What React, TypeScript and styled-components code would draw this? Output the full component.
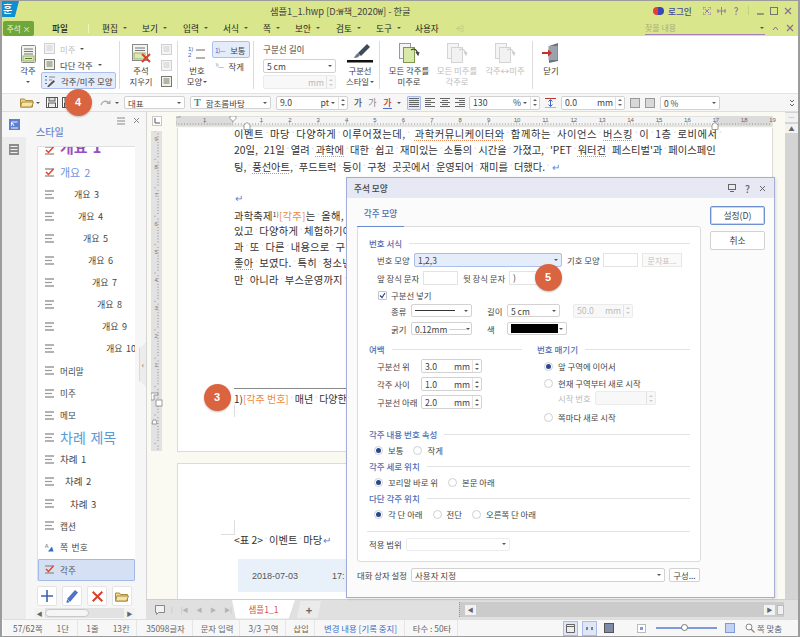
import React from 'react';
import styled, { createGlobalStyle } from 'styled-components';

const FONT = `"Noto Sans CJK KR", "Noto Sans", "Liberation Sans", sans-serif`;

const Global = createGlobalStyle`
  html, body { margin: 0; padding: 0; background: #fff; }
  body { font-family: ${FONT}; font-size: 8.8px; color: #3a3a3a; }
  * { box-sizing: border-box; }
`;

const Window = styled.div`
  width: 800px; height: 637px; position: relative; overflow: hidden;
  display: flex; flex-direction: column;
  border: 1px solid #9c9c9c; border-left-width: 2px; border-right-width: 2px;
  background: #fff;
`;

/* ---------- title + menu ---------- */
const TitleBar = styled.div`
  height: 19px; flex: none; background: #d9e68c; display: flex; align-items: center; position: relative; padding-right: 3px;
`;
const LogoBox = styled.div`
  width: 19px; height: 16px; margin-left: -2px; margin-top: -3px; background: #0f8fd2; color: #fff;
  clip-path: polygon(0 0, 100% 0, 78% 100%, 0 100%);
  font-size: 10px; font-weight: 700; line-height: 15px; text-align: center; padding-right: 4px;
`;
const TitleText = styled.div`
  margin-left: 251px; font-size: 9.3px; color: #444; white-space: nowrap; width: 383px;
`;
const LoginMark = styled.div`
  width: 11px; height: 8px; border-radius: 5px; flex: none; background: linear-gradient(90deg, #e2403c 0 45%, #3b46b4 45%);
`;
const LoginText = styled.div`
  margin-left: 4px; color: #4a4a9a; font-weight: 500; font-size: 8.6px; width: 33px;
`;
const TitleIcons = styled.div`
  display: flex; align-items: center; color: #8b5f8f;
`;
const IconSlot = styled.div<{ $w: number }>`
  width: ${p => p.$w}px; display: flex; justify-content: center; align-items: center; flex: none;
  font-size: 10px; color: inherit;
`;
const MenuBar = styled.div`
  height: 16px; flex: none; background: #d9e68c; display: flex; align-items: center; position: relative;
`;
const ContextTab = styled.div`
  width: 31px; height: 15px; margin-left: 1px; border-radius: 2px; background: #6ea83d; color: #eef6dd;
  font-size: 7.6px; display: flex; align-items: center; justify-content: center; gap: 2px;
`;
const FileMenu = styled.div`
  width: 33px; margin-left: 18px; font-size: 8.6px; color: #222; font-weight: 500;
`;
const MenuSep = styled.div`
  width: 1px; height: 9px; background: #eef5bf; margin-left: 3px; margin-right: 13px;
`;
const MenuEntry = styled.div<{ $w: number }>`
  width: ${p => p.$w}px; font-size: 8.6px; color: #222; display: flex; align-items: center; gap: 5px; white-space: nowrap; flex: none;
`;
const Caret = styled.span`
  display: inline-block; width: 0; height: 0; border-left: 2px solid transparent; border-right: 2px solid transparent;
  border-top: 2px solid #555; flex: none;
`;
const ShareSlot = styled.div`
  margin-left: 12px; flex: none;
`;
const FindBox = styled.div`
  width: 120px; height: 13px; margin-left: 181px; border-bottom: 1px solid #a57fb5; color: #a9ad80; font-size: 8px; flex: none;
  display: flex; justify-content: space-between; align-items: center; padding-right: 1px;
`;

/* ---------- ribbon ---------- */
const Ribbon = styled.div`
  height: 58px; flex: none; background: #fff; display: flex; align-items: stretch; padding: 5px 0 0;
  border-bottom: 1px solid #e3e3e3; position: relative;
`;
const RGroup = styled.div<{ $w: number; $line?: boolean }>`
  width: ${p => p.$w}px; height: 48px; display: flex; flex: none; border-right: ${p => (p.$line ? '1px solid #dcdcdc' : 'none')};
`;
const BigBtn = styled.div<{ $w: number; $ml: number; $off?: boolean }>`
  width: ${p => p.$w}px; margin-left: ${p => p.$ml}px; display: flex; flex-direction: column; align-items: center; flex: none;
  font-size: 8.4px; line-height: 11px; color: ${p => (p.$off ? '#bdbdbd' : '#3d3d3d')}; white-space: nowrap;
`;
const BigIcon = styled.div`
  height: 22px; display: flex; align-items: flex-end; margin-bottom: 2px;
`;
const BigCaret = styled(Caret)`
  margin-top: 5px;
`;
const SmallCol = styled.div<{ $ml: number; $w?: number }>`
  margin-left: ${p => p.$ml}px; width: ${p => (p.$w ? `${p.$w}px` : 'auto')}; display: flex; flex-direction: column; gap: 0; flex: none;
`;
const SmallBtn = styled.div<{ $on?: boolean; $off?: boolean; $h?: number }>`
  height: ${p => p.$h || 16}px; display: flex; align-items: center; gap: 5px; padding: 0 2px; white-space: nowrap; font-size: 8.4px;
  color: ${p => (p.$off ? '#bdbdbd' : '#3d3d3d')}; border-radius: 2px;
  border: 1px solid ${p => (p.$on ? '#aac0ea' : 'transparent')}; background: ${p => (p.$on ? '#e5ecf9' : 'transparent')};
`;
const TinyRule = styled.span<{ $c: string }>`
  color: ${p => p.$c}; font-size: 6.5px; letter-spacing: -0.5px;
`;
const FieldLabel = styled.div`
  height: 18px; line-height: 16px; font-size: 8.6px; color: #444;
`;
const FieldGap = styled.div`
  height: 2px; flex: none;
`;

/* ---------- shared form controls ---------- */
const SelectBox = styled.div<{ $w: number; $h?: number; $off?: boolean; $hl?: boolean; $ml?: number }>`
  width: ${p => p.$w}px; height: ${p => p.$h || 13}px; margin-left: ${p => p.$ml || 0}px; flex: none; display: flex; align-items: center; justify-content: space-between;
  padding: 0 3px; background: ${p => (p.$hl ? '#e6edfa' : '#fff')};
  border: 1px solid ${p => (p.$hl ? '#aac0ea' : p.$off ? '#ececec' : '#d2d2d2')};
  border-radius: 2px; font-size: 8.5px; color: ${p => (p.$off ? '#bbb' : '#444')}; white-space: nowrap; overflow: hidden;
`;
const SpinBox = styled.div<{ $w: number; $off?: boolean; $ml?: number }>`
  width: ${p => p.$w}px; height: 14px; margin-left: ${p => p.$ml || 0}px; flex: none; display: flex; align-items: center; justify-content: space-between;
  padding: 0 0 0 3px; background: ${p => (p.$off ? '#f8f8f8' : '#fff')}; border: 1px solid ${p => (p.$off ? '#ebebeb' : '#d2d2d2')};
  border-radius: 2px; font-size: 8.7px; color: ${p => (p.$off ? '#bbb' : '#444')};
`;
const SpinArrows = styled.div`
  width: 9px; height: 100%; border-left: 1px solid #e2e2e2; display: flex; flex-direction: column; align-items: center; justify-content: center; gap: 3px;
`;
const Up = styled.span<{ $off?: boolean }>`
  width: 0; height: 0; border-left: 2px solid transparent; border-right: 2px solid transparent; border-bottom: 2px solid ${p => (p.$off ? '#ccc' : '#666')};
`;
const Down = styled.span<{ $off?: boolean }>`
  width: 0; height: 0; border-left: 2px solid transparent; border-right: 2px solid transparent; border-top: 2px solid ${p => (p.$off ? '#ccc' : '#666')};
`;
const Unit = styled.span`
  margin-left: auto; margin-right: 2px;
`;
const UnitCaret = styled(Caret)`
  margin-right: 3px;
`;
const Spin = ({ w, value, unit, off, ml, caret }: { w: number; value?: string; unit?: string; off?: boolean; ml?: number; caret?: boolean }) => (
  <SpinBox $w={w} $off={off} $ml={ml}>
    <span>{value}</span>
    {unit && <Unit>{unit}</Unit>}
    {caret && <UnitCaret />}
    <SpinArrows><Up $off={off} /><Down $off={off} /></SpinArrows>
  </SpinBox>
);

/* ---------- format bar ---------- */
const FormatBar = styled.div`
  height: 18px; flex: none; background: #f6f6f6; display: flex; align-items: center; border-bottom: 1px solid #dedede;
`;
const FSlot = styled.div<{ $w: number; $ml?: number; $on?: boolean }>`
  width: ${p => p.$w}px; height: 14px; margin-left: ${p => p.$ml || 0}px; flex: none; display: flex; align-items: center; justify-content: center;
  border: 1px solid ${p => (p.$on ? '#a9bde8' : 'transparent')}; background: ${p => (p.$on ? '#dfe7f7' : 'transparent')}; border-radius: 1px;
  font-size: 9px; font-weight: 500; color: #555;
`;
const FontMark = styled.span`
  color: #1e9a8f; font-family: "Liberation Serif", serif; font-weight: 700; font-size: 10px; margin-right: 4px;
`;
const Inline = styled.span`
  display: flex; align-items: center; gap: 1px;
`;
const GrayGa = styled.span`
  font-weight: 400; color: #888;
`;
const ColorGa = styled.span`
  border-bottom: 1.5px solid #4a72c8; color: #c0392b; line-height: 11px;
`;

/* ---------- workspace ---------- */
const Workspace = styled.div`
  flex: 1; min-height: 0; display: flex;
`;
const SideRail = styled.div`
  width: 24px; flex: none; background: #ececec; display: flex; flex-direction: column;
`;
const RailTab = styled.div<{ $on?: boolean }>`
  height: 25px; display: flex; align-items: center; justify-content: center; background: ${p => (p.$on ? '#f7f7f7' : 'transparent')};
`;
const StylePanel = styled.div`
  width: 120px; flex: none; background: #f6f6f6; display: flex; flex-direction: column; position: relative;
`;
const PanelHead = styled.div`
  height: 34px; flex: none; display: flex; padding: 5px 6px 0 10px; justify-content: space-between;
`;
const PanelTitle = styled.div`
  color: #6f88cf; font-size: 10px; padding-top: 7px; font-weight: 500;
`;
const PanelTools = styled.div`
  display: flex; gap: 8px; color: #888; font-size: 10px; line-height: 10px;
`;
const StyleList = styled.div`
  margin-left: 11px; width: 98px; height: 435px; flex: none; background: #fff; border: 1px solid #e0e0e0; border-right: none; border-bottom: none;
  overflow: hidden; display: flex; flex-direction: column;
`;
const StyleRows = styled.div`
  margin-top: -8px; display: flex; flex-direction: column;
`;
const StyleRow = styled.div<{ $on?: boolean }>`
  height: 22.1px; flex: none; display: flex; align-items: center; padding-left: 6px; white-space: nowrap;
  background: ${p => (p.$on ? '#d6e0f4' : 'transparent')}; border: 1px solid ${p => (p.$on ? '#a3bae6' : 'transparent')}; border-left-width: 1px; border-radius: 1px;
`;
const StyleName = styled.span<{ $pad: number; $size: number; $color: string; $bold?: boolean; $lift?: number }>`
  margin-left: ${p => p.$pad}px; font-size: ${p => p.$size}px; color: ${p => p.$color}; font-weight: ${p => (p.$bold ? 700 : 400)}; word-spacing: 1.5px;
  transform: translateY(${p => -(p.$lift || 0)}px);
`;
const PanelButtons = styled.div`
  margin-left: 11px; margin-top: 5px; display: flex; gap: 5px; height: 20px; flex: none;
`;
const PanelBtn = styled.div`
  width: 20px; height: 20px; background: #fff; border: 1px solid #e4e4e4; border-radius: 2px; display: flex; align-items: center; justify-content: center;
`;
const HScroll = styled.div`
  margin: 2px 0 0 8px; width: 101px; height: 10px; display: flex; align-items: center; background: #e2e2e2;
`;
const ScrollBtn = styled.div`
  width: 11px; height: 10px; background: #f2f2f2; color: #666; font-size: 6px; display: flex; align-items: center; justify-content: center; flex: none;
`;
const ScrollThumb = styled.div`
  width: 44px; height: 8px; background: #f5f5f5; border: 1px solid #c9c9c9; border-radius: 4px; margin-right: auto;
`;
const CollapseHandle = styled.div`
  position: absolute; right: 0; top: 231px; width: 7px; height: 43px; background: #ececec; border: 1px solid #dadada; border-right: none;
  border-radius: 3px 0 0 3px; color: #666; font-size: 8px; display: flex; align-items: center; justify-content: center;
  clip-path: polygon(0 12%, 100% 0, 100% 100%, 0 88%);
`;

/* ---------- document ---------- */
const DocArea = styled.div`
  flex: 1; min-width: 0; display: flex; flex-direction: column;
`;
const DocMain = styled.div`
  flex: 1; min-height: 0; display: flex; background: #fafaf2; border-left: 1px solid #d5d5d5;
`;
const DocCanvas = styled.div`
  flex: 1; min-width: 0; display: flex; flex-direction: column;
`;
const RulerRow = styled.div`
  height: 16px; flex: none; display: flex; align-items: flex-start; padding: 4px 0 0 5px; position: relative; z-index: 1;
`;
const RulerCorner = styled.div`
  width: 10px; height: 10px; background: #fff; border: 1px solid #c8c8c8; margin-right: 14px; display: flex; align-items: center; justify-content: center; flex: none;
`;
const DocBody = styled.div`
  flex: 1; min-height: 0; display: flex;
`;
const VRulerCol = styled.div`
  width: 30px; flex: none; padding: 3px 0 0 4px;
`;
const Pages = styled.div`
  flex: 1; min-width: 0; display: flex; flex-direction: column; gap: 11px; overflow: hidden; padding-right: 12px;
`;
const Page = styled.div<{ $h: number }>`
  height: ${p => p.$h}px; flex: none; background: #fff; border: 1px solid #dcdcd4; position: relative; padding-left: 56px; overflow: hidden;
  color: #333; font-size: 10.3px;
`;
const Page1 = styled(Page)`
  border-top: none; & > :first-child { margin-top: -2px; }
`;
const TextLine = styled.div<{ $ls?: number }>`
  height: 16.4px; line-height: 16px; white-space: nowrap; letter-spacing: ${p => (p.$ls === undefined ? 0.2 : p.$ls)}px;
`;
const SpaceMark = styled.span`
  display: inline-block; width: 6px; text-align: center; color: #7a9fe0; font-size: 7px; letter-spacing: 0; vertical-align: 1px;
`;
const Wavy = styled.span`
  text-decoration: underline dotted #ef8a55 1px; text-underline-offset: 2px;
`;
const Orange = styled.span`
  color: #f08a3c;
`;
const Sup = styled.span`
  font-size: 6.5px; vertical-align: 3px;
`;
const ReturnMark = styled.span`
  color: #5b84d8; font-size: 10px; margin-left: 1px;
`;
const BlankLine = styled.div`
  height: 14.6px;
`;
const FootRule = styled.div`
  height: 1px; background: #8a8a8a; margin-top: 100px;
`;
const FootLine = styled.div`
  height: 20px; line-height: 20px; white-space: nowrap; font-size: 10px;
`;
const NoteCrop = styled.div`
  position: absolute; left: 56px; top: 277px; width: 1px; height: 12px; background: #ddd;
`;
const CaptionCrop = styled.div`
  position: absolute; left: 43px; top: 56px; width: 14px; height: 15px; border-bottom: 1px solid #ddd; border-right: 1px solid #ddd;
`;
const CaptionSpacer = styled.div`
  height: 68px;
`;
const CaptionLine = styled.div`
  height: 15px; line-height: 15px; white-space: nowrap;
`;
const DataBand = styled.div`
  margin-left: 4px; margin-top: 12px; height: 33px; background: #e8f0fa; display: flex; align-items: center; padding-left: 14px; gap: 34px; font-size: 9px; color: #555; font-family: "Liberation Sans", sans-serif;
`;
const VScroll = styled.div`
  width: 13px; flex: none; background: #d4d4d4; display: flex; flex-direction: column; align-items: center; padding-top: 1px; gap: 2px;
`;
const VScrollBtn = styled.div`
  width: 13px; height: 9px; background: #f2f2f2; color: #666; font-size: 6px; display: flex; align-items: center; justify-content: center;
`;
const TabBar = styled.div`
  height: 20px; flex: none; background: #e0e0e0; display: flex; align-items: center; padding-left: 9px; border-top: 1px solid #cfcfcf;
`;
const NavIcons = styled.div`
  width: 63px; display: flex; align-items: center; gap: 8px; padding-left: 2px; color: #b5b5b5; font-size: 6px; margin-left: 4px; flex: none;
`;
const DocTab = styled.div`
  width: 63px; height: 19px; margin-top: -1px; background: #fff; flex: none; display: flex; align-items: center; justify-content: center; color: #d9534f; font-size: 8.6px;
  clip-path: polygon(0 0, 100% 0, 90% 100%, 6% 100%);
`;
const AddTab = styled.div`
  width: 24px; height: 17px; margin-left: 2px; background: #ebebeb; flex: none; display: flex; align-items: center; justify-content: center; color: #666; font-size: 11px; font-weight: 700;
  clip-path: polygon(14% 0, 100% 0, 86% 100%, 0 100%);
`;
const TabScroll = styled.div`
  margin-left: 138px; width: 325px; height: 15px; display: flex; align-items: center; background: #cbcbcb; gap: 0; padding-left: 5px; border-left: 1px dotted #999; flex: none;
`;
const TabTrack = styled.div`
  width: 288px; flex: none;
`;
const SplitBtn = styled.div`
  width: 7px; height: 10px; background: #f0f0f0; border: 1px solid #bbb; margin-left: 2px; position: relative;
`;

/* ---------- status ---------- */
const StatusBar = styled.div`
  height: 17px; flex: none; background: #f7f7f7; display: flex; align-items: center; border-top: 1px solid #dedede; font-size: 8.4px; color: #666; margin-left: 1px;
`;
const StatusCell = styled.div<{ $w: number; $blue?: boolean }>`
  width: ${p => p.$w}px; height: 100%; flex: none; display: flex; align-items: center; justify-content: center; gap: 14px; padding-left: 2px;
  border-right: 1px solid #e6e6e6; white-space: nowrap; color: ${p => (p.$blue ? '#3d6cc6' : '#666')};
`;
const StatusTools = styled.div`
  flex: 1; display: flex; align-items: center; padding-left: 105px; position: relative;
`;
const ViewBtn = styled.div<{ $on?: boolean; $ml?: number; $mr?: number }>`
  width: 15px; height: 15px; margin-left: ${p => p.$ml || 0}px; margin-right: ${p => (p.$mr === undefined ? 4 : p.$mr)}px; border: 1px solid ${p => (p.$on ? '#a9bde8' : 'transparent')}; background: ${p => (p.$on ? '#dfe7f7' : 'transparent')}; display: flex; align-items: center; justify-content: center;
`;
const ZoomTrack = styled.div`
  width: 61px; height: 2px; background: #7f9ad8; margin: 0 5px 0 7px; position: relative;
`;
const ZoomKnob = styled.div`
  position: absolute; left: 25px; top: -3px; width: 7px; height: 7px; border-radius: 50%; background: #fff; border: 1px solid #777;
`;
const FitLabel = styled.span`
  margin-left: 2px; white-space: nowrap;
`;

/* ---------- dialog ---------- */
const Dialog = styled.div`
  position: absolute; left: 344px; top: 176px; width: 429px; height: 421px; background: #fbfbfb; z-index: 2;
  border: 1px solid #a3add8; box-shadow: 1px 1px 3px rgba(0,0,0,.12); display: flex; flex-direction: column;
`;
const DialogTitle = styled.div`
  height: 20px; flex: none; background: #e6e9f3; display: flex; align-items: center; padding: 0 8px 0 7px; justify-content: space-between; font-size: 8.6px; color: #444; font-weight: 500;
`;
const DialogTools = styled.div`
  display: flex; align-items: center; gap: 9px; color: #666; font-size: 10px;
`;
const DialogBody = styled.div`
  flex: 1; display: flex; padding-left: 10px;
`;
const DialogMain = styled.div`
  width: 344px; flex: none; display: flex; flex-direction: column;
`;
const TabStrip = styled.div`
  height: 28px; flex: none; display: flex; align-items: flex-end;
`;
const ActiveTab = styled.div`
  width: 47px; height: 28px; display: flex; align-items: center; justify-content: center; color: #4f6fb4; border-bottom: 1px solid #6b8bd0; font-size: 8.6px; font-weight: 500; margin-bottom: -1px; position: relative;
`;
const ContentBox = styled.div`
  height: 336px; flex: none; background: #fff; border: 1px solid #dcdcdc; border-radius: 3px; padding: 10px 10px 0 11px; display: flex; flex-direction: column;
`;
const Head = styled.div<{ $mt?: number }>`
  height: 12px; margin-top: ${p => p.$mt || 0}px; flex: none; display: flex; align-items: center; gap: 7px; color: #4f6fb4; font-size: 8.5px; white-space: nowrap; font-weight: 500;
  &::after { content: ''; flex: 1; height: 1px; background: #e3e3e3; }
`;
const FormRow = styled.div<{ $mt?: number; $pl?: number; $h?: number }>`
  height: ${p => p.$h || 14}px; margin-top: ${p => p.$mt || 0}px; padding-left: ${p => p.$pl || 0}px; flex: none; display: flex; align-items: center; white-space: nowrap; font-size: 8.4px; color: #444;
`;
const Lbl = styled.span<{ $w?: number; $ml?: number; $off?: boolean }>`
  width: ${p => (p.$w ? `${p.$w}px` : 'auto')}; margin-left: ${p => p.$ml || 0}px; flex: none; color: ${p => (p.$off ? '#b9b9b9' : '#444')};
`;
const PlainInput = styled.div<{ $w: number }>`
  width: ${p => p.$w}px; height: 14px; flex: none; background: #fff; border: 1px solid #e3e3e3; padding-left: 3px; line-height: 12px; font-size: 8.7px;
`;
const GhostBtn = styled.div`
  width: 40px; height: 14px; margin-left: 4px; flex: none; border: 1px solid #e8e8e8; background: #fafafa; color: #c2c2c2; font-size: 8px; display: flex; align-items: center; justify-content: center;
`;
const Check = styled.span`
  width: 9px; height: 9px; flex: none; border: 1px solid #c4c4c4; background: #fff; border-radius: 1px; margin-right: 4px; display: flex; align-items: center; justify-content: center;
`;
const LineSample = styled.span<{ $w: number }>`
  width: ${p => p.$w}px; height: 1px; background: #333; display: inline-block;
`;
const ColorSwatch = styled.span`
  width: 47px; height: 9px; background: #000; display: inline-block;
`;
const TwoCol = styled.div`
  display: flex; flex: none;
`;
const ColLeft = styled.div`
  width: 168px; padding-right: 15px; flex: none; display: flex; flex-direction: column;
`;
const ColRight = styled.div`
  flex: 1; display: flex; flex-direction: column;
`;
const RadioDot = styled.span<{ $on?: boolean }>`
  width: 9px; height: 9px; flex: none; border-radius: 50%; border: 1px solid #cfcfcf; background: #fff; margin-right: 5px; display: flex; align-items: center; justify-content: center;
  &::after { content: ''; width: 5px; height: 5px; border-radius: 50%; background: ${p => (p.$on ? '#2b4690' : 'transparent')}; }
`;
const RadioWrap = styled.span<{ $gap?: number }>`
  display: inline-flex; align-items: center; margin-right: ${p => p.$gap || 0}px;
`;
const Radio = ({ on, label, gap }: { on?: boolean; label: string; gap?: number }) => (
  <RadioWrap $gap={gap}><RadioDot $on={on} />{label}</RadioWrap>
);
const Divider = styled.div`
  height: 1px; flex: none; background: #e3e3e3; margin: 11px 0 0 -2px;
`;
const DialogFoot = styled.div`
  height: 14px; margin-top: 6px; flex: none; display: flex; align-items: center; white-space: nowrap; font-size: 8.4px; color: #444;
`;
const SmallBtnBox = styled.div`
  width: 31px; height: 14px; margin-left: 4px; flex: none; background: #fff; border: 1px solid #d2d2d2; border-radius: 2px; display: flex; align-items: center; justify-content: center; font-size: 8.4px; color: #444;
`;
const DialogSide = styled.div`
  margin-left: 9px; padding-top: 8px; display: flex; flex-direction: column; gap: 6px;
`;
const DialogBtn = styled.div<{ $primary?: boolean }>`
  width: 55px; height: 19px; background: #fff; display: flex; align-items: center; justify-content: center; border-radius: 2px; font-size: 8.8px; color: #444;
  border: 1px solid ${p => (p.$primary ? '#6f8fd0' : '#d2d2d2')}; box-shadow: ${p => (p.$primary ? 'inset 0 0 0 1px #c8d6f0' : 'none')};
`;
const Callout = styled.div<{ $x: number; $y: number }>`
  position: absolute; left: ${p => p.$x - 13.5}px; top: ${p => p.$y - 13.5}px; width: 27px; height: 27px; border-radius: 50%; background: #da6340;
  color: #fff; font-family: "Liberation Sans", sans-serif; font-weight: 700; font-size: 11px; display: flex; align-items: center; justify-content: center;
  box-shadow: 0 1px 2px rgba(0,0,0,.25); z-index: 5;
`;

/* ---------- icons ---------- */
const Svg = ({ w, h, children }: { w: number; h: number; children: React.ReactNode }) => (
  <svg width={w} height={h} viewBox={`0 0 ${w} ${h}`} style={{ display: 'block', flex: 'none' }}>{children}</svg>
);
const DocLines = ({ off }: { off?: boolean }) => {
  const c = off ? '#cfcfcf' : '#777';
  return (
    <Svg w={11} h={11}>
      <rect x=".5" y=".5" width="10" height="10" fill={off ? '#f4f4f4' : '#eef4e0'} stroke={c} />
      <path d="M2.5 3h6M2.5 5h6M2.5 7h6" stroke={c} />
    </Svg>
  );
};
const FootnoteIcon = () => (
  <Svg w={15} h={18}>
    <rect x=".5" y=".5" width="14" height="17" rx="1" fill="#f3f3ef" stroke="#8a8a8a" />
    <path d="M3 4h9M3 6.5h9M3 9h9" stroke="#777" />
    <rect x="2" y="11" width="11" height="5" fill="#dbe8b4" stroke="#9ab36a" />
    <path d="M4 13.5h7" stroke="#5a7a2a" />
  </Svg>
);
const ShapeIcon = () => (
  <Svg w={12} h={12}>
    <path d="M1 1.5h2M1 5h2M1 8.5h2" stroke="#3d76c8" strokeWidth="1.2" />
    <path d="M5 2h6M5 5h3" stroke="#888" />
    <path d="M3.5 11l6-6 1.5 1.5-6 5.5H3.5z" fill="#555" />
  </Svg>
);
const EraseIcon = () => (
  <Svg w={19} h={19}>
    <rect x=".5" y=".5" width="15" height="16" fill="#f3f3ef" stroke="#8a8a8a" />
    <path d="M3 4h10M3 6.5h10" stroke="#777" />
    <rect x="2" y="9" width="11" height="6" fill="#dbe8b4" stroke="#9ab36a" />
    <path d="M10 10l8 8M18 10l-8 8" stroke="#d9402c" strokeWidth="2" />
  </Svg>
);
const NumberIcon = () => (
  <Svg w={18} h={18}>
    <text x="0" y="6" fontSize="6" fill="#2e62b8" fontFamily="Liberation Sans">1)</text>
    <text x="0" y="12" fontSize="6" fill="#2e62b8" fontFamily="Liberation Sans">2</text>
    <text x="0" y="17" fontSize="5" fill="#2e62b8" fontFamily="Liberation Sans">↓</text>
    <path d="M8 5h9M8 13h9" stroke="#666" />
  </Svg>
);
const BrushIcon = () => (
  <Svg w={26} h={20}>
    <path d="M20 1l3 3-9 9-3-3z" fill="#3d4a58" />
    <path d="M11 10c-2 1-3 3-4 5 3 0 5-1 6-3z" fill="#6a7785" />
    <rect x="0" y="17" width="26" height="2.5" fill="#111" />
  </Svg>
);
const ConvertIcon = ({ off }: { off?: boolean }) => {
  const s = off ? '#d4d4d4' : '#7d9a4a';
  const f = off ? '#f2f2f2' : '#d9e8a8';
  return (
    <Svg w={21} h={20}>
      <rect x=".5" y=".5" width="11" height="15" fill="#f4f4f4" stroke={off ? '#d4d4d4' : '#999'} />
      <rect x="4.5" y="4.5" width="11" height="15" fill={f} stroke={s} />
      <path d="M12 7c4-2 6 0 7 4M17 9l2 3 1-3" fill="none" stroke={off ? '#d0d0d0' : '#444'} strokeWidth="1.2" />
    </Svg>
  );
};
const ExitIcon = () => (
  <Svg w={18} h={20}>
    <path d="M7 3l9-3v18l-9 2z" fill="#6d7580" />
    <rect x="6.5" y="3" width="9" height="14" fill="#9aa2ac" />
    <path d="M0 10h7" stroke="#c9302c" strokeWidth="2" />
    <path d="M6 6.5l4 3.5-4 3.5z" fill="#c9302c" />
  </Svg>
);
const FolderIcon = () => (
  <Svg w={14} h={11}>
    <path d="M.5 2h4l1 1.5h7v6.5H.5z" fill="#f0d58a" stroke="#a88b3c" />
    <path d="M2 5h11.5l-2 5H.5z" fill="#f6e3a8" stroke="#a88b3c" />
  </Svg>
);
const SaveIcon = () => (
  <Svg w={12} h={11}>
    <rect x=".5" y=".5" width="11" height="10" fill="#fff" stroke="#555" />
    <rect x="3" y=".5" width="6" height="3.5" fill="#ddd" stroke="#555" />
    <rect x="2.5" y="6" width="7" height="4.5" fill="#eee" stroke="#555" />
  </Svg>
);
const RedoIcon = () => (
  <Svg w={11} h={9}>
    <path d="M1 7c1-4 5-5 8-2" fill="none" stroke="#aaa" strokeWidth="1.3" />
    <path d="M10.5 2v4h-4z" fill="#aaa" />
  </Svg>
);
const AlignIcon = ({ kind }: { kind: 'j' | 'l' | 'c' | 'r' }) => {
  const rows = [0, 1, 2, 3, 4];
  const geo = (i: number): [number, number] => {
    const short = i % 2 === 1;
    if (kind === 'j') return [0, 10];
    if (kind === 'l') return [0, short ? 6 : 10];
    if (kind === 'c') return short ? [2, 8] : [0, 10];
    return short ? [4, 10] : [0, 10];
  };
  return (
    <Svg w={10} h={10}>
      {rows.map(i => {
        const [a, b] = geo(i);
        return <rect key={i} x={a} y={i * 2} width={b - a} height="1" fill="#666" />;
      })}
    </Svg>
  );
};
const LineGapIcon = () => (
  <Svg w={11} h={10}>
    <path d="M0 .5h11" stroke="#b33" /><path d="M0 9.5h11" stroke="#b33" opacity=".4" />
    <path d="M5.5 2v6M3.5 3.5l2-2 2 2M3.5 6.5l2 2 2-2" stroke="#3a66b8" fill="none" />
  </Svg>
);
const OutlineBox = () => (
  <Svg w={10} h={10}><rect x=".5" y=".5" width="9" height="9" fill="#d8d8d8" stroke="#999" /></Svg>
);
const RailStyleIcon = () => (
  <Svg w={11} h={11}>
    <rect width="11" height="11" fill="#5d7fd0" />
    <path d="M2.5 5.5V3h6M2 7l1.5-3 1.5 3M2 9h7" stroke="#fff" fill="none" strokeWidth=".9" />
  </Svg>
);
const RailListIcon = () => (
  <Svg w={10} h={11}>
    <rect width="10" height="11" fill="#8b8b8b" />
    <path d="M1.5 2.5h7M1.5 5.5h7M1.5 8.5h7" stroke="#eee" />
  </Svg>
);
const StyleMark = ({ kind }: { kind: 'plain' | 'check' | 'letter' }) => (
  <Svg w={9} h={9}>
    {kind === 'letter' ? (
      <>
        <path d="M0 5l1.7-4 1.7 4M.8 3.8h1.8" stroke="#888" fill="none" strokeWidth=".7" />
        <path d="M3 8.5l4-5 1.5 5z" fill="#2c6fc8" />
      </>
    ) : (
      <>
        <path d="M0 1h9M0 8h9" stroke="#9a9a9a" strokeWidth="1.5" />
        {kind === 'plain' && <path d="M0 4.5h7" stroke="#9a9a9a" strokeWidth="1.2" />}
        {kind === 'check' && <path d="M1 4l2.5 2.5L8.5 1" stroke="#e0452c" fill="none" strokeWidth="1.5" />}
      </>
    )}
  </Svg>
);
const PlusIcon = () => <Svg w={12} h={12}><path d="M6 0v12M0 6h12" stroke="#3e62b0" strokeWidth="1.6" /></Svg>;
const PenIcon = () => (
  <Svg w={12} h={13}>
    <path d="M9 0l3 2.5L4 12 .5 13 1 9z" fill="#4d74c6" />
    <path d="M1 9l3 3" stroke="#a9bfe8" />
  </Svg>
);
const CrossIcon = () => <Svg w={11} h={11}><path d="M.7.7l9.6 9.6M10.3.7L.7 10.3" stroke="#d9402c" strokeWidth="2" /></Svg>;
const RulerH = () => {
  const W = 596;
  const zero = 57;
  const cm = 28.4;
  const ticks = [] as React.ReactNode[];
  for (let i = 0; i < W; i += 2.84) {
    const major = Math.abs(((i - zero) / cm) - Math.round((i - zero) / cm)) < 0.05;
    ticks.push(<path key={i} d={`M${i.toFixed(1)} ${major ? 5 : 7}V9`} stroke="#9a9a9a" strokeWidth=".6" />);
  }
  const labels = [1, 0, 1, 2, 3, 4, 5, 6, 7, 8, 9, 10, 11, 12, 13, 14, 15, 16, 17, 18, 19];
  return (
    <Svg w={604} h={14}>
      <rect width={W} height="10" fill="#f4f4f4" stroke="#d0d0d0" />
      <rect width={zero} height="10" fill="#dcdcdc" />
      <rect x="539" width="57" height="10" fill="#dcdcdc" />
      {ticks}
      {labels.map((n, i) => (n === 0 ? null : (
        <text key={i} x={zero + (i - 1) * cm} y="6" fontSize="6" fill="#666" textAnchor="middle" fontFamily="Liberation Sans">{n}</text>
      )))}
      <path d="M54 0h6v2.5l-3 3-3-3z" fill="#fff" stroke="#777" strokeWidth=".7" />
      <path d="M68 13.5V9l3-2.5L74 9v4.5z" fill="#fff" stroke="#777" strokeWidth=".7" />
      <path d="M536 13.5V9l3-2.5L542 9v4.5z" fill="#fff" stroke="#777" strokeWidth=".7" />
      <rect x="-2" y="-1" width="6" height="2" fill="#fff" stroke="#777" strokeWidth=".7" />
    </Svg>
  );
};
const RulerV = () => {
  const H = 320;
  const ticks = [] as React.ReactNode[];
  for (let y = 0; y < H; y += 2.84) {
    ticks.push(<path key={y} d={`M${Math.round(y / 2.84) % 10 === 0 ? 3 : 6} ${y.toFixed(1)}h2`} stroke="#9a9a9a" strokeWidth=".6" />);
  }
  const nums = [9, 8, 7, 6, 5, 4, 3, 2, 1];
  return (
    <Svg w={12} h={H}>
      <rect width="11" height={H} fill="#e2e2e2" />
      {ticks}
      {nums.map((n, i) => (
        <text key={n} x="5" y={10 + i * 28.2} fontSize="5.5" fill="#777" textAnchor="middle" fontFamily="Liberation Sans">{n}</text>
      ))}
      <path d="M0 262h7v2H3v5H0z" fill="#fff" stroke="#777" strokeWidth=".7" />
      <rect x="5" y="269" width="6" height="6" fill="#fff" stroke="#777" strokeWidth=".7" />
      <path d="M1 293h5l-1-4H2z" fill="#fff" stroke="#777" strokeWidth=".7" />
    </Svg>
  );
};

const renderMarks = (s: string) =>
  s.split('˅').map((part, i, arr) => (
    <React.Fragment key={i}>{part}{i < arr.length - 1 && <SpaceMark>˅</SpaceMark>}</React.Fragment>
  ));

const STYLES: { name: string; pad: number; size: number; color: string; bold?: boolean; kind: 'plain' | 'check' | 'letter'; on?: boolean; lift?: number }[] = [
  { name: '개요 1', pad: 6, size: 15, color: '#9a4fc0', bold: true, kind: 'check', lift: 4 },
  { name: '개요 2', pad: 6, size: 11, color: '#6f93e0', kind: 'check' },
  { name: '개요 3', pad: 20, size: 9, color: '#444', kind: 'plain' },
  { name: '개요 4', pad: 24, size: 9, color: '#444', kind: 'plain' },
  { name: '개요 5', pad: 29, size: 9, color: '#444', kind: 'plain' },
  { name: '개요 6', pad: 34, size: 9, color: '#444', kind: 'plain' },
  { name: '개요 7', pad: 38, size: 9, color: '#444', kind: 'plain' },
  { name: '개요 8', pad: 43, size: 9, color: '#444', kind: 'plain' },
  { name: '개요 9', pad: 48, size: 9, color: '#444', kind: 'plain' },
  { name: '개요 10', pad: 52, size: 9, color: '#444', kind: 'plain' },
  { name: '머리말', pad: 6, size: 8.6, color: '#444', kind: 'plain' },
  { name: '미주', pad: 6, size: 8.6, color: '#444', kind: 'plain' },
  { name: '메모', pad: 6, size: 8.6, color: '#444', kind: 'plain' },
  { name: '차례 제목', pad: 6, size: 14, color: '#5a9ad8', kind: 'plain' },
  { name: '차례 1', pad: 6, size: 9.5, color: '#444', kind: 'plain' },
  { name: '차례 2', pad: 11, size: 9.5, color: '#444', kind: 'plain' },
  { name: '차례 3', pad: 16, size: 9.5, color: '#444', kind: 'plain' },
  { name: '캡션', pad: 6, size: 8.6, color: '#444', kind: 'plain' },
  { name: '쪽 번호', pad: 6, size: 8.8, color: '#444', kind: 'letter' },
  { name: '각주', pad: 6, size: 8.6, color: '#555', kind: 'check', on: true },
];

const MENUS: [string, number][] = [['편집', 40], ['보기', 41], ['입력', 40], ['서식', 40], ['쪽', 32], ['보안', 41], ['검토', 40], ['도구', 39]];

export default function App() {
  return (
    <>
      <Global />
      <Window>
        <TitleBar>
          <LogoBox>훈</LogoBox>
          <TitleText>샘플1_1.hwp [D:₩책_2020₩] - 한글</TitleText>
          <LoginMark />
          <LoginText>로그인</LoginText>
          <TitleIcons>
            <IconSlot $w={12}>
              <Svg w={8} h={8}><path d="M0 3V0h3M5 0h3v3M8 5v3H5M3 8H0V5M2 2l4 4M6 2L2 6" stroke="#9a78a8" fill="none" /></Svg>
            </IconSlot>
            <IconSlot $w={16}>
              <Svg w={9} h={8}><path d="M4.5 0v8M1 2v4M8 2v4M0 4h9" stroke="#9a78a8" fill="none" /></Svg>
            </IconSlot>
            <IconSlot $w={14}>?</IconSlot>
            <IconSlot $w={10}>
              <Svg w={1} h={9}><path d="M.5 0v9" stroke="#c3d276" /></Svg>
            </IconSlot>
            <IconSlot $w={14}><Svg w={8} h={8}><path d="M1 7h7" stroke="#666" strokeWidth="1.2" /></Svg></IconSlot>
            <IconSlot $w={14}><Svg w={8} h={8}><rect x=".5" y=".5" width="7" height="7" fill="none" stroke="#776" /></Svg></IconSlot>
            <IconSlot $w={14}><Svg w={8} h={8}><path d="M1 1l6 6M7 1L1 7" stroke="#8b6a90" strokeWidth="1.1" /></Svg></IconSlot>
          </TitleIcons>
        </TitleBar>
        <MenuBar>
          <ContextTab>주석 <span>×</span></ContextTab>
          <FileMenu>파일</FileMenu>
          <MenuSep />
          {MENUS.map(([m, w]) => (
            <MenuEntry key={m} $w={w}>{m}<Caret /></MenuEntry>
          ))}
          <MenuEntry $w={28}>사용자</MenuEntry>
          <ShareSlot><Svg w={9} h={9}><path d="M1 4.5L8 1v7zM1 4.5h7" fill="none" stroke="#c6d380" /></Svg></ShareSlot>
          <FindBox>찾을 내용<Caret /></FindBox>
          <IconSlot $w={20}><Svg w={7} h={5}><path d="M1 4l2.5-3L6 4" fill="none" stroke="#8b6a90" /></Svg></IconSlot>
          <IconSlot $w={9}><Svg w={8} h={8}><path d="M1 1l6 6M7 1L1 7" stroke="#8b6a90" strokeWidth="1.1" /></Svg></IconSlot>
        </MenuBar>

        <Ribbon>
          <RGroup $w={118} $line>
            <BigBtn $w={22} $ml={15}>
              <BigIcon><FootnoteIcon /></BigIcon>
              각주
              <BigCaret />
            </BigBtn>
            <SmallCol $ml={2} $w={75}>
              <SmallBtn $off><DocLines off /> 미주 <Caret /></SmallBtn>
              <SmallBtn><DocLines /> 다단 각주 <Caret /></SmallBtn>
              <SmallBtn $on $h={17}><ShapeIcon />각주/미주 모양</SmallBtn>
            </SmallCol>
          </RGroup>
          <RGroup $w={58} $line>
            <BigBtn $w={24} $ml={9}>
              <BigIcon><EraseIcon /></BigIcon>
              <span>주석</span>
              <span>지우기</span>
            </BigBtn>
            <SmallCol $ml={5}>
              <SmallBtn $off><DocLines off /></SmallBtn>
              <SmallBtn $off><DocLines off /></SmallBtn>
              <SmallBtn><DocLines /></SmallBtn>
            </SmallCol>
          </RGroup>
          <RGroup $w={76} $line>
            <BigBtn $w={26} $ml={6}>
              <BigIcon><NumberIcon /></BigIcon>
              <span>번호</span>
              <Inline>모양<Caret /></Inline>
            </BigBtn>
            <SmallCol $ml={2} $w={38}>
              <SmallBtn $on $h={17}><TinyRule $c="#3668c0">1)—</TinyRule>보통</SmallBtn>
              <SmallBtn><TinyRule $c="#777">¹⁾—</TinyRule>작게</SmallBtn>
            </SmallCol>
          </RGroup>
          <RGroup $w={126} $line>
            <SmallCol $ml={9} $w={74}>
              <FieldLabel>구분선 길이</FieldLabel>
              <SelectBox $w={73} $h={14}>5 cm<Caret /></SelectBox>
              <FieldGap />
              <Spin w={73} unit="mm" off />
            </SmallCol>
            <BigBtn $w={28} $ml={9}>
              <BigIcon><BrushIcon /></BigIcon>
              <span>구분선</span>
              <Inline>스타일<Caret /></Inline>
            </BigBtn>
          </RGroup>
          <RGroup $w={153} $line>
            <BigBtn $w={40} $ml={9}>
              <BigIcon><ConvertIcon /></BigIcon>
              <span>모든 각주를</span>
              <span>미주로</span>
            </BigBtn>
            <BigBtn $w={40} $ml={8} $off>
              <BigIcon><ConvertIcon off /></BigIcon>
              <span>모든 미주를</span>
              <span>각주로</span>
            </BigBtn>
            <BigBtn $w={38} $ml={9} $off>
              <BigIcon><ConvertIcon off /></BigIcon>
              <span>각주↔미주</span>
            </BigBtn>
          </RGroup>
          <RGroup $w={40}>
            <BigBtn $w={18} $ml={9}>
              <BigIcon><ExitIcon /></BigIcon>
              닫기
            </BigBtn>
          </RGroup>
        </Ribbon>

        <FormatBar>
          <FSlot $w={15} $ml={17}><FolderIcon /></FSlot>
          <FSlot $w={8}><Caret /></FSlot>
          <FSlot $w={14} $ml={3}><SaveIcon /></FSlot>
          <FSlot $w={14} $ml={2}><SaveIcon /></FSlot>
          <FSlot $w={16} $ml={22}><RedoIcon /></FSlot>
          <FSlot $w={8}><Caret /></FSlot>
          <SelectBox $w={61} $ml={3}>대표<Caret /></SelectBox>
          <SelectBox $w={81} $ml={5}>
            <Inline><FontMark>T</FontMark>함초롬바탕</Inline><Caret />
          </SelectBox>
          <Spin w={72} ml={5} value="9.0" unit="pt" caret />
          <FSlot $w={14} $ml={3}>가</FSlot>
          <FSlot $w={15}><GrayGa>가</GrayGa></FSlot>
          <FSlot $w={15}><ColorGa>가</ColorGa></FSlot>
          <FSlot $w={8}><Caret /></FSlot>
          <FSlot $w={14} $ml={4} $on><AlignIcon kind="j" /></FSlot>
          <FSlot $w={15} $ml={1}><AlignIcon kind="l" /></FSlot>
          <FSlot $w={15}><AlignIcon kind="c" /></FSlot>
          <FSlot $w={15}><AlignIcon kind="r" /></FSlot>
          <Spin w={71} ml={2} value="130" unit="%" caret />
          <FSlot $w={15} $ml={3}><LineGapIcon /></FSlot>
          <Spin w={64} ml={3} value="0.0" unit="mm" />
          <FSlot $w={14} $ml={3}><OutlineBox /></FSlot>
          <FSlot $w={14} $ml={1}><OutlineBox /></FSlot>
          <SelectBox $w={60} $h={14} $ml={3}>0 %<Caret /></SelectBox>
          <FSlot $w={8} $ml={68}><Svg w={6} h={8}><path d="M1 1l2 2 2-2M1 5l2 2 2-2" fill="none" stroke="#666" /></Svg></FSlot>
        </FormatBar>

        <Workspace>
          <SideRail>
            <RailTab $on><RailStyleIcon /></RailTab>
            <RailTab><RailListIcon /></RailTab>
          </SideRail>
          <StylePanel>
            <PanelHead>
              <PanelTitle>스타일</PanelTitle>
              <PanelTools>
                <Svg w={8} h={8}><path d="M0 1h8M0 4h8M0 7h8" stroke="#888" /></Svg>
                <Svg w={7} h={7}><path d="M1 1l5 5M6 1L1 6" stroke="#888" /></Svg>
              </PanelTools>
            </PanelHead>
            <StyleList>
              <StyleRows>
                {STYLES.map(s => (
                  <StyleRow key={s.name} $on={s.on}>
                    <StyleMark kind={s.kind} />
                    <StyleName $pad={s.pad} $size={s.size} $color={s.color} $bold={s.bold} $lift={s.lift}>{s.name}</StyleName>
                  </StyleRow>
                ))}
              </StyleRows>
            </StyleList>
            <PanelButtons>
              <PanelBtn><PlusIcon /></PanelBtn>
              <PanelBtn><PenIcon /></PanelBtn>
              <PanelBtn><CrossIcon /></PanelBtn>
              <PanelBtn><FolderIcon /></PanelBtn>
            </PanelButtons>
            <HScroll>
              <ScrollBtn>◀</ScrollBtn>
              <ScrollThumb />
              <ScrollBtn>▶</ScrollBtn>
            </HScroll>
            <CollapseHandle>‹</CollapseHandle>
          </StylePanel>

          <DocArea>
            <DocMain>
              <DocCanvas>
                <RulerRow>
                  <RulerCorner><Svg w={6} h={6}><path d="M1 0v5h5" fill="none" stroke="#555" /></Svg></RulerCorner>
                  <RulerH />
                </RulerRow>
                <DocBody>
                  <VRulerCol><RulerV /></VRulerCol>
                  <Pages>
                    <Page1 $h={324}>
                      <TextLine $ls={0.55}>{renderMarks('이벤트˅마당˅다양하게˅이루어졌는데,˅ ')}<Wavy>과학커뮤니케이터와</Wavy>{renderMarks('˅함께하는˅사이언스˅')}<Wavy>버스킹</Wavy>{renderMarks('˅이˅1층˅로비에서˅')}</TextLine>
                      <TextLine $ls={0}>{renderMarks('20일,˅21일˅열려˅')}<Wavy>과학에</Wavy>{renderMarks('˅대한˅쉽고˅재미있는˅소통의˅시간을˅가졌고,˅\'PET˅')}<Wavy>워터건</Wavy>{renderMarks('˅페스티벌\'과˅페이스페인')}</TextLine>
                      <TextLine $ls={-0.05}>{renderMarks('팅,˅')}<Wavy>풍선아트</Wavy>{renderMarks(',˅푸드트럭˅등이˅구청˅곳곳에서˅운영되어˅재미를˅더했다.˅')}<ReturnMark>↵</ReturnMark></TextLine>
                      <BlankLine />
                      <TextLine><ReturnMark>↵</ReturnMark></TextLine>
                      <TextLine>과학축제<Sup>1)</Sup><Orange>[각주]</Orange>{renderMarks('는˅올해,')}</TextLine>
                      <TextLine>{renderMarks('있고˅다양하게˅체험하기에')}</TextLine>
                      <TextLine>{renderMarks('과˅또˅다른˅내용으로˅구')}</TextLine>
                      <TextLine><Wavy>좋아</Wavy>{renderMarks('˅보였다.˅특히˅청소년')}</TextLine>
                      <TextLine>{renderMarks('만˅아니라˅부스운영까지˅')}</TextLine>
                      <FootRule />
                      <FootLine>1)<Orange>[각주 번호]</Orange>{renderMarks('˅매년˅다양한˅')}</FootLine>
                      <NoteCrop />
                    </Page1>
                    <Page $h={140}>
                      <CaptionSpacer />
                      <CaptionCrop />
                      <CaptionLine>&lt;표 2&gt;{renderMarks('˅이벤트˅마당')}<ReturnMark>↵</ReturnMark></CaptionLine>
                      <DataBand><span>2018-07-03</span><span>17:</span></DataBand>
                    </Page>
                  </Pages>
                </DocBody>
              </DocCanvas>
              <VScroll>
                <VScrollBtn>─</VScrollBtn>
                <VScrollBtn>▲</VScrollBtn>
              </VScroll>
            </DocMain>
            <TabBar>
              <Svg w={10} h={10}><path d="M.5.5h9v7h-6l-2 2v-2h-1z" fill="#f2f2f2" stroke="#888" /></Svg>
              <NavIcons><span>|</span><span>|◀</span><span>◀</span><span>▶</span><span>▶|</span></NavIcons>
              <DocTab>샘플1_1</DocTab>
              <AddTab>+</AddTab>
              <TabScroll>
                <ScrollBtn>◀</ScrollBtn>
                <TabTrack />
                <ScrollBtn>▶</ScrollBtn>
                <SplitBtn />
              </TabScroll>
            </TabBar>
          </DocArea>
        </Workspace>

        <StatusBar>
          <StatusCell $w={75}><span>57/62쪽</span><span>1단</span></StatusCell>
          <StatusCell $w={59}><span>1줄</span><span>13칸</span></StatusCell>
          <StatusCell $w={56}>35098글자</StatusCell>
          <StatusCell $w={47}>문자 입력</StatusCell>
          <StatusCell $w={46}>3/3 구역</StatusCell>
          <StatusCell $w={29}>삽입</StatusCell>
          <StatusCell $w={90} $blue>변경 내용 [기록 중지]</StatusCell>
          <StatusCell $w={53}>타수 : 50타</StatusCell>
          <StatusTools>
            <ViewBtn $on><Svg w={9} h={9}><path d="M.5.5h8v8h-8zM.5 2.5h8" fill="#eee" stroke="#666" /></Svg></ViewBtn>
            <ViewBtn $on><Svg w={9} h={9}><path d="M2 3v3M7 3v3" stroke="#555" strokeWidth="1.4" /></Svg></ViewBtn>
            <ViewBtn><Svg w={10} h={10}><rect x=".5" y=".5" width="9" height="9" fill="#7f8aa8" stroke="#555" /></Svg></ViewBtn>
            <ViewBtn $ml={14} $mr={0}><Svg w={9} h={9}><rect x=".5" y=".5" width="8" height="8" fill="#fff" stroke="#bbb" /><rect x="3" y="3" width="3" height="3" fill="#7f9ad8" /></Svg></ViewBtn>
            <ZoomTrack><ZoomKnob /></ZoomTrack>
            <ViewBtn $mr={8}><Svg w={10} h={10}><rect x=".5" y=".5" width="9" height="9" fill="#c2d2f0" stroke="#7f9ad8" /></Svg></ViewBtn>
            <Svg w={10} h={10}><circle cx="4" cy="4" r="3" fill="#fff" stroke="#888" /><path d="M6 6l3.5 3.5" stroke="#888" strokeWidth="1.2" /></Svg>
            <FitLabel>쪽 맞춤</FitLabel>
          </StatusTools>
        </StatusBar>

        <Dialog>
          <DialogTitle>
            주석 모양
            <DialogTools>
              <Svg w={8} h={8}><rect x=".5" y=".5" width="7" height="5" fill="none" stroke="#666" /><path d="M2 7.5h4" stroke="#666" /></Svg>
              <span>?</span>
              <Svg w={7} h={7}><path d="M1 1l5 5M6 1L1 6" stroke="#666" /></Svg>
            </DialogTools>
          </DialogTitle>
          <DialogBody>
            <DialogMain>
              <TabStrip><ActiveTab>각주 모양</ActiveTab></TabStrip>
              <ContentBox>
                <Head>번호 서식</Head>
                <FormRow $mt={4} $pl={8}>
                  <Lbl $w={37}>번호 모양</Lbl>
                  <SelectBox $w={148} $h={14} $hl>1,2,3<Caret /></SelectBox>
                  <Lbl $ml={5} $w={36}>기호 모양</Lbl>
                  <PlainInput $w={35} />
                  <GhostBtn>문자표...</GhostBtn>
                </FormRow>
                <FormRow $mt={4} $pl={8}>
                  <Lbl $w={46}>앞 장식 문자</Lbl>
                  <PlainInput $w={35} />
                  <Lbl $ml={5} $w={46}>뒷 장식 문자</Lbl>
                  <PlainInput $w={30}>)</PlainInput>
                </FormRow>
                <FormRow $mt={4} $pl={9} $h={12}>
                  <Check><Svg w={7} h={7}><path d="M1 3.5l2 2L6 1" fill="none" stroke="#2b4690" strokeWidth="1.2" /></Svg></Check>
                  구분선 넣기
                </FormRow>
                <FormRow $mt={3} $pl={22} $h={13}>
                  <Lbl $w={20}>종류</Lbl>
                  <SelectBox $w={61}><LineSample $w={40} /><Caret /></SelectBox>
                  <Lbl $ml={15} $w={20}>길이</Lbl>
                  <SelectBox $w={53}>5 cm<Caret /></SelectBox>
                  <Spin w={60} ml={13} value="50.0" unit="mm" off />
                </FormRow>
                <FormRow $mt={5} $pl={22} $h={13}>
                  <Lbl $w={20}>굵기</Lbl>
                  <SelectBox $w={61}>0.12mm ──<Caret /></SelectBox>
                  <Lbl $ml={15} $w={20}>색</Lbl>
                  <SelectBox $w={60}><ColorSwatch /><Caret /></SelectBox>
                </FormRow>
                <TwoCol>
                  <ColLeft>
                    <Head $mt={8}>여백</Head>
                    <FormRow $mt={4} $pl={8}><Lbl $w={44}>구분선 위</Lbl><Spin w={61} value="3.0" unit="mm" /></FormRow>
                    <FormRow $mt={4} $pl={8}><Lbl $w={44}>각주 사이</Lbl><Spin w={61} value="1.0" unit="mm" /></FormRow>
                    <FormRow $mt={4} $pl={8}><Lbl $w={44}>구분선 아래</Lbl><Spin w={61} value="2.0" unit="mm" /></FormRow>
                  </ColLeft>
                  <ColRight>
                    <Head $mt={8}>번호 매기기</Head>
                    <FormRow $mt={4} $pl={7}><Radio on label="앞 구역에 이어서" /></FormRow>
                    <FormRow $mt={3} $pl={7}><Radio label="현재 구역부터 새로 시작" /></FormRow>
                    <FormRow $mt={1} $pl={21}><Lbl $w={37} $off>시작 번호</Lbl><Spin w={61} off /></FormRow>
                    <FormRow $mt={5} $pl={7}><Radio label="쪽마다 새로 시작" /></FormRow>
                  </ColRight>
                </TwoCol>
                <Head $mt={4}>각주 내용 번호 속성</Head>
                <FormRow $mt={4} $pl={5} $h={12}><Radio on label="보통" gap={10} /><Radio label="작게" /></FormRow>
                <Head $mt={4}>각주 세로 위치</Head>
                <FormRow $mt={4} $pl={5} $h={12}><Radio on label="꼬리말 바로 위" gap={10} /><Radio label="본문 아래" /></FormRow>
                <Head $mt={4}>다단 각주 위치</Head>
                <FormRow $mt={4} $pl={5} $h={12}><Radio on label="각 단 아래" gap={10} /><Radio label="전단" gap={10} /><Radio label="오른쪽 단 아래" /></FormRow>
                <Divider />
                <FormRow $mt={5}>
                  <Lbl $w={37}>적용 범위</Lbl>
                  <SelectBox $w={104} $off>&nbsp;<Caret /></SelectBox>
                </FormRow>
              </ContentBox>
              <DialogFoot>
                <Lbl $w={54}>대화 상자 설정</Lbl>
                <SelectBox $w={254} $h={14}>사용자 지정<Caret /></SelectBox>
                <SmallBtnBox>구성...</SmallBtnBox>
              </DialogFoot>
            </DialogMain>
            <DialogSide>
              <DialogBtn $primary>설정(D)</DialogBtn>
              <DialogBtn>취소</DialogBtn>
            </DialogSide>
          </DialogBody>
        </Dialog>

        <Callout $x={76} $y={101}>4</Callout>
        <Callout $x={546} $y={276}>5</Callout>
        <Callout $x={215} $y={396}>3</Callout>
      </Window>
    </>
  );
}
